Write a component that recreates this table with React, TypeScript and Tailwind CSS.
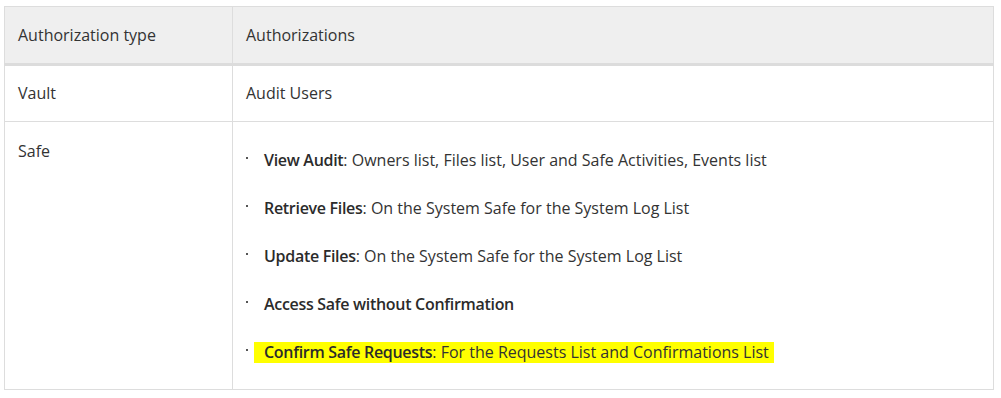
import React from "react";

const items: { b: string; rest?: string; hl?: boolean }[] = [
  { b: "View Audit", rest: ": Owners list, Files list, User and Safe Activities, Events list" },
  { b: "Retrieve Files", rest: ": On the System Safe for the System Log List" },
  { b: "Update Files", rest: ": On the System Safe for the System Log List" },
  { b: "Access Safe without Confirmation" },
  { b: "Confirm Safe Requests", rest: ": For the Requests List and Confirmations List", hl: true },
];

export default function App() {
  return (
    <div
      className="w-[1001px] h-[398px] bg-white pt-[6px] pl-[4px] text-[16px] text-[#333333]"
      style={{ fontFamily: '"Open Sans", "Noto Sans", sans-serif' }}
    >
      <table className="w-[990px] border-collapse border border-[#dddddd]">
        <thead>
          <tr className="bg-[#efefef] h-[58px] border-b-[3px] border-[#dcdcdc]">
            <th className="w-[228px] text-left font-normal pl-[13px] pr-[14px] border-r border-[#dddddd] leading-[21px]">
              Authorization type
            </th>
            <th className="text-left font-normal pl-[13px] pr-[14px] leading-[21px]">Authorizations</th>
          </tr>
        </thead>
        <tbody>
          <tr className="h-[57px] border-b border-[#dddddd]">
            <td className="pl-[13px] pr-[14px] border-r border-[#dddddd] leading-[21px]">Vault</td>
            <td className="pl-[13px] pr-[14px] leading-[21px]">Audit Users</td>
          </tr>
          <tr className="h-[268px]">
            <td className="align-top pl-[13px] pr-[14px] pt-[19px] border-r border-[#dddddd] leading-[21px]">Safe</td>
            <td className="align-top pl-[13px] pt-[28px] leading-[21px]">
              <ul className="flex flex-col gap-[27px]">
                {items.map((it, i) => (
                  <li key={i} className="flex items-center">
                    <span className="w-[2px] h-[2px] bg-[#555] mr-[8px] -mt-[6px]" />
                    <span
                      className={
                        it.hl
                          ? "bg-[#ffff00] pl-[10px] pr-[5px] -ml-[2px]"
                          : "pl-[8px]"
                      }
                    >
                      <span className="font-semibold tracking-[-0.3px] text-[#2b2b2b]">{it.b}</span>
                      {it.rest}
                    </span>
                  </li>
                ))}
              </ul>
            </td>
          </tr>
        </tbody>
      </table>
    </div>
  );
}
